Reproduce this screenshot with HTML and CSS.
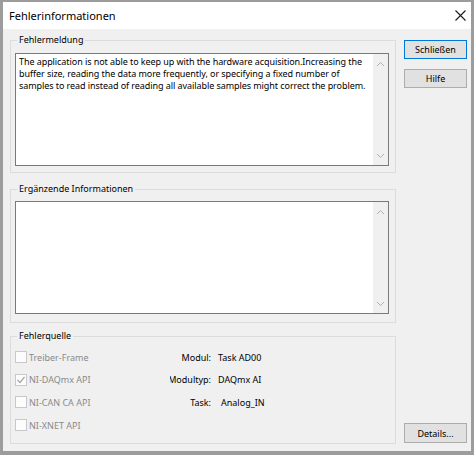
FILE: index.html
```html
<!DOCTYPE html>
<html lang="de">
<head>
<meta charset="utf-8">
<title>Fehlerinformationen</title>
<link rel="stylesheet" href="styles.css">
</head>
<body>
<div class="window">
  <div class="titlebar">
    <span class="title">Fehlerinformationen</span>
    <svg class="close" width="11" height="11" viewBox="0 0 11 11"><path d="M0.5 0.5 L10.5 10.5 M10.5 0.5 L0.5 10.5" stroke="#1a1a1a" stroke-width="1.1" fill="none"/></svg>
  </div>
  <div class="content">
    <div class="groups">
      <fieldset class="group g1">
        <legend>Fehlermeldung</legend>
        <div class="textbox">
          <div class="text">The application is not able to keep up with the hardware acquisition.Increasing the buffer size, reading the data more frequently, or specifying a fixed number of samples to read instead of reading all available samples might correct the problem.</div>
          <div class="scroll">
            <svg width="9" height="6" viewBox="0 0 9 6"><polyline points="1,5 4.5,1.5 8,5" stroke="#b0b0b0" stroke-width="1" fill="none"/></svg>
            <svg width="9" height="6" viewBox="0 0 9 6"><polyline points="1,1 4.5,4.5 8,1" stroke="#b0b0b0" stroke-width="1" fill="none"/></svg>
          </div>
        </div>
      </fieldset>
      <fieldset class="group g2">
        <legend>Ergänzende Informationen</legend>
        <div class="textbox">
          <div class="text"></div>
          <div class="scroll">
            <svg width="9" height="6" viewBox="0 0 9 6"><polyline points="1,5 4.5,1.5 8,5" stroke="#b0b0b0" stroke-width="1" fill="none"/></svg>
            <svg width="9" height="6" viewBox="0 0 9 6"><polyline points="1,1 4.5,4.5 8,1" stroke="#b0b0b0" stroke-width="1" fill="none"/></svg>
          </div>
        </div>
      </fieldset>
      <fieldset class="group g3">
        <legend>Fehlerquelle</legend>
        <div class="source">
          <div class="checks">
            <div class="check"><span class="box"></span><span>Treiber-Frame</span></div>
            <div class="check"><span class="box"><svg width="10" height="10" viewBox="0 0 10 10"><polyline points="1.5,5 4,7.5 8.5,2" stroke="#a8a8a8" stroke-width="1.2" fill="none"/></svg></span><span>NI-DAQmx API</span></div>
            <div class="check"><span class="box"></span><span>NI-CAN CA API</span></div>
            <div class="check"><span class="box"></span><span>NI-XNET API</span></div>
          </div>
          <div class="info">
            <div class="lbl"><span>Modul:</span></div><div class="val">Task AD00</div>
            <div class="lbl"><span>Modultyp:</span></div><div class="val">DAQmx AI</div>
            <div class="lbl"><span>Task:</span></div><div class="val v3">Analog_IN</div>
          </div>
        </div>
      </fieldset>
    </div>
    <div class="buttons">
      <div class="btn default">Schließen</div>
      <div class="btn">Hilfe</div>
      <div class="spacer"></div>
      <div class="btn details">Details...</div>
    </div>
  </div>
</div>
</body>
</html>
```
FILE: styles.css
```css
html, body {
  margin: 0;
  padding: 0;
}
body {
  background: #9c9c9c;
  width: 474px;
  height: 455px;
  overflow: hidden;
  font-family: "Noto Sans", "Liberation Sans", sans-serif;
  font-size: 9px;
  color: #000;
}
.window {
  margin: 2px 0 0 3px;
  width: 468px;
  height: 449px;
  background: #f0f0f0;
  display: flex;
  flex-direction: column;
}
.titlebar {
  height: 27px;
  background: #fff;
  display: flex;
  align-items: center;
  justify-content: space-between;
  padding: 0 5px 0 6px;
}
.title {
  font-size: 11px;
  color: #000;
}
.close {
  display: block;
}
.content {
  display: flex;
  flex: 1;
}
.groups {
  width: 386px;
  margin-left: 7px;
  display: flex;
  flex-direction: column;
}
.group {
  border: 1px solid #dcdcdc;
  margin: 0;
  padding: 0 6px 6px 4px;
  min-width: 0;
}
.group legend {
  padding: 0 2px;
  margin-left: 2px;
  line-height: 12px;
  color: #000;
}
.g1 { margin-top: 5px; }
.g2 { margin-top: 10px; padding-bottom: 8px; }
.g3 { margin-top: 7px; padding-bottom: 7px; }
.textbox {
  height: 113px;
  box-sizing: border-box;
  border: 1px solid #7a7a7a;
  background: #fff;
  display: flex;
}
.g1 .textbox { margin-top: 7px; }
.g2 .textbox { margin-top: 6px; }
.text {
  flex: 1;
  padding: 2px 2px 2px 3px;
  line-height: 12px;
  font-size: 9px;
  letter-spacing: -0.07px;
}
.scroll {
  width: 15px;
  background: #f0f0f0;
  display: flex;
  flex-direction: column;
  justify-content: space-between;
  align-items: center;
  padding: 7px 0 6px;
}
.scroll svg { display: block; }
.source {
  display: flex;
  margin-top: 4px;
}
.checks {
  width: 155px;
  display: flex;
  flex-direction: column;
}
.check {
  height: 22.6px;
  display: flex;
  align-items: center;
  color: #8a8a8a;
}
.box {
  width: 12px;
  height: 12px;
  box-sizing: border-box;
  border: 1px solid #c8c8c8;
  background: #fcfcfc;
  margin-right: 2px;
  display: flex;
  align-items: center;
  justify-content: center;
}
.info {
  display: grid;
  grid-template-columns: 41px auto;
  grid-auto-rows: 22.6px;
  column-gap: 7px;
  align-items: center;
}
.lbl {
  overflow: hidden;
  display: flex;
  justify-content: flex-end;
}
.lbl span {
  white-space: nowrap;
  flex-shrink: 0;
}
.val { white-space: nowrap; }
.v3 { padding-left: 3px; }
.buttons {
  margin-left: 8px;
  width: 63px;
  display: flex;
  flex-direction: column;
  padding-top: 11px;
  padding-bottom: 8px;
}
.btn {
  height: 19px;
  box-sizing: border-box;
  border: 1px solid #adadad;
  background: #e1e1e1;
  display: flex;
  align-items: center;
  justify-content: center;
}
.btn + .btn { margin-top: 10px; }
.default {
  border-color: #0078d7;
}
.spacer { flex: 1; }
.details { height: 20px; }
```
